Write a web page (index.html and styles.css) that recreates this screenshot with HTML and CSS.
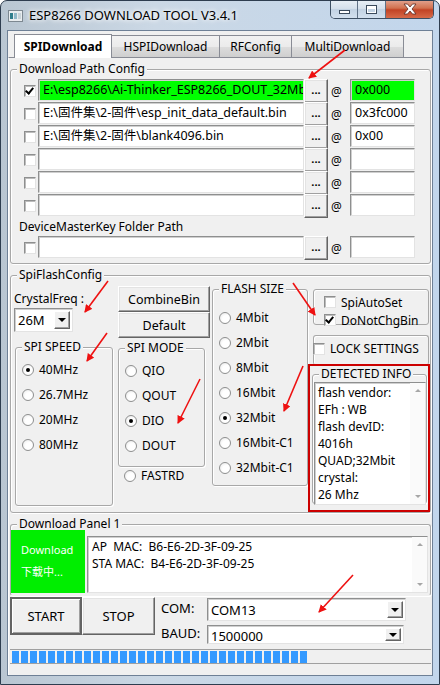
FILE: index.html
```html
<!DOCTYPE html>
<html>
<head>
<meta charset="utf-8">
<title>ESP8266 DOWNLOAD TOOL</title>
<link rel="stylesheet" href="styles.css">
</head>
<body>
<div class="window">
  <div class="titlebar">
    <svg class="app-icon" width="15" height="12" viewBox="0 0 15 12">
      <rect x="0.5" y="0.5" width="14" height="11" fill="#e8ecef" stroke="#7d8891"/>
      <rect x="2" y="3" width="3" height="6" fill="#2f7d8c"/>
      <rect x="6" y="3" width="3" height="6" fill="#8fb8c8"/>
      <rect x="10" y="3" width="3" height="6" fill="#c9d3d8"/>
    </svg>
    <span class="title">ESP8266 DOWNLOAD TOOL V3.4.1</span>
    <div class="caption">
      <span class="cap cap-min"><i></i></span>
      <span class="cap cap-max"><i></i></span>
      <span class="cap cap-close">
        <svg width="16" height="12" viewBox="0 0 16 12"><path d="M2 1 L5.5 1 L8 4 L10.5 1 L14 1 L10 6 L14 11 L10.5 11 L8 8 L5.5 11 L2 11 L6 6 Z" fill="#fff" stroke="#5a2a22" stroke-width="0.8"/></svg>
      </span>
    </div>
  </div>

  <div class="client">
    <div class="tabs">
      <span class="tab active">SPIDownload</span>
      <span class="tab">HSPIDownload</span>
      <span class="tab">RFConfig</span>
      <span class="tab">MultiDownload</span>
    </div>

    <div class="panel">
      <fieldset class="group g-path">
        <legend>Download Path Config</legend>
        <div class="prow">
          <span class="chk checked"></span>
          <span class="tbox path green"><span class="tb-text">E:\esp8266\Ai-Thinker_ESP8266_DOUT_32Mb</span></span>
          <span class="btn dots">...</span>
          <span class="at">@</span>
          <span class="tbox addr green">0x000</span>
        </div>
        <div class="prow">
          <span class="chk"></span>
          <span class="tbox path"><span class="tb-text">E:\固件集\2-固件\esp_init_data_default.bin</span></span>
          <span class="btn dots">...</span>
          <span class="at">@</span>
          <span class="tbox addr">0x3fc000</span>
        </div>
        <div class="prow">
          <span class="chk"></span>
          <span class="tbox path"><span class="tb-text">E:\固件集\2-固件\blank4096.bin</span></span>
          <span class="btn dots">...</span>
          <span class="at">@</span>
          <span class="tbox addr">0x00</span>
        </div>
        <div class="prow">
          <span class="chk"></span>
          <span class="tbox path"></span>
          <span class="btn dots">...</span>
          <span class="at">@</span>
          <span class="tbox addr"></span>
        </div>
        <div class="prow">
          <span class="chk"></span>
          <span class="tbox path"></span>
          <span class="btn dots">...</span>
          <span class="at">@</span>
          <span class="tbox addr"></span>
        </div>
        <div class="prow">
          <span class="chk"></span>
          <span class="tbox path"></span>
          <span class="btn dots">...</span>
          <span class="at">@</span>
          <span class="tbox addr"></span>
        </div>
        <div class="dmk">DeviceMasterKey Folder Path</div>
        <div class="prow">
          <span class="chk"></span>
          <span class="tbox path"></span>
          <span class="btn dots">...</span>
          <span class="at">@</span>
          <span class="tbox addr"></span>
        </div>
      </fieldset>

      <fieldset class="group g-spi">
        <legend>SpiFlashConfig</legend>
        <div class="spi-cols">
          <div class="col-a">
            <div class="lbl crystal">CrystalFreq :</div>
            <div class="combo c-crystal"><span class="combo-text">26M</span><span class="drop"><b></b></span></div>
            <fieldset class="group g-speed">
              <legend>SPI SPEED</legend>
              <div class="radio-row"><span class="radio on"></span>40MHz</div>
              <div class="radio-row"><span class="radio"></span>26.7MHz</div>
              <div class="radio-row"><span class="radio"></span>20MHz</div>
              <div class="radio-row"><span class="radio"></span>80MHz</div>
            </fieldset>
          </div>
          <div class="col-b">
            <span class="btn wide b-combine">CombineBin</span>
            <span class="btn wide b-default">Default</span>
            <fieldset class="group g-mode">
              <legend>SPI MODE</legend>
              <div class="radio-row"><span class="radio"></span>QIO</div>
              <div class="radio-row"><span class="radio"></span>QOUT</div>
              <div class="radio-row"><span class="radio on"></span>DIO</div>
              <div class="radio-row"><span class="radio"></span>DOUT</div>
            </fieldset>
            <div class="radio-row fastrd"><span class="radio"></span>FASTRD</div>
          </div>
          <fieldset class="group g-size">
            <legend>FLASH SIZE</legend>
            <div class="radio-row"><span class="radio"></span>4Mbit</div>
            <div class="radio-row"><span class="radio"></span>2Mbit</div>
            <div class="radio-row"><span class="radio"></span>8Mbit</div>
            <div class="radio-row"><span class="radio"></span>16Mbit</div>
            <div class="radio-row"><span class="radio on"></span>32Mbit</div>
            <div class="radio-row"><span class="radio"></span>16Mbit-C1</div>
            <div class="radio-row"><span class="radio"></span>32Mbit-C1</div>
          </fieldset>
          <div class="col-d">
            <div class="box box-opts">
              <div class="chk-row"><span class="chk"></span>SpiAutoSet</div>
              <div class="chk-row"><span class="chk checked"></span>DoNotChgBin</div>
            </div>
            <div class="box box-lock">
              <div class="chk-row lock"><span class="chk"></span>LOCK SETTINGS</div>
            </div>
            <div class="redmark">
              <fieldset class="group g-detect">
                <legend>DETECTED INFO</legend>
                <div class="textarea info">
                  <div class="ta-text">flash vendor:<br>EFh : WB<br>flash devID:<br>4016h<br>QUAD;32Mbit<br>crystal:<br>26 Mhz</div>
                  <div class="vscroll"><span class="up"></span><span class="down"></span></div>
                </div>
              </fieldset>
            </div>
          </div>
        </div>
      </fieldset>

      <fieldset class="group g-dl">
        <legend>Download Panel 1</legend>
        <div class="dl-row">
          <div class="dl-status">Download<br>下载中...</div>
          <div class="textarea mac">
            <div class="ta-text">AP&nbsp; MAC:&nbsp; B6-E6-2D-3F-09-25<br>STA MAC:&nbsp; B4-E6-2D-3F-09-25</div>
            <div class="vscroll"><span class="up"></span><span class="down"></span></div>
          </div>
        </div>
      </fieldset>

      <div class="ctrl-row">
        <span class="btn big default-btn">START</span>
        <span class="btn big">STOP</span>
        <div class="port-labels">
          <div class="plbl">COM:</div>
          <div class="plbl">BAUD:</div>
        </div>
        <div class="port-combos">
          <div class="combo c-com"><span class="combo-text">COM13</span><span class="drop"><b></b></span></div>
          <div class="combo c-baud"><span class="combo-text">1500000</span><span class="drop"><b></b></span></div>
        </div>
      </div>

      <div class="progress">
        <span></span><span></span><span></span><span></span><span></span><span></span><span></span><span></span><span></span><span></span><span></span>
        <span></span><span></span><span></span><span></span><span></span><span></span><span></span><span></span><span></span><span></span><span></span>
        <span></span><span></span><span></span><span></span><span></span><span></span><span></span><span></span><span></span><span></span><span></span>
      </div>
    </div>
  </div>

  <svg class="arrows" width="440" height="685" viewBox="0 0 440 685">
    <defs>
      <marker id="ah" markerWidth="8" markerHeight="8" refX="7" refY="4" orient="auto" markerUnits="userSpaceOnUse">
        <path d="M0 0 L8 4 L0 8 Z" fill="#ee1111"/>
      </marker>
    </defs>
    <g stroke="#ee1111" stroke-width="1.6" marker-end="url(#ah)">
      <line x1="345" y1="50" x2="309" y2="78"/>
      <line x1="108" y1="281" x2="85" y2="312"/>
      <line x1="107" y1="333" x2="87" y2="361"/>
      <line x1="200" y1="379" x2="178" y2="423"/>
      <line x1="293" y1="283" x2="315" y2="315"/>
      <line x1="303" y1="366" x2="284" y2="411"/>
      <line x1="353" y1="575" x2="319" y2="612"/>
    </g>
  </svg>
</div>
</body>
</html>
```

FILE: styles.css
```css
* { box-sizing: border-box; }
html, body { margin: 0; padding: 0; background: #fff; }
body {
  font-family: "Noto Sans", "Noto Sans CJK SC", sans-serif;
  font-size: 12px;
  color: #000;
}

.window {
  position: relative;
  width: 440px;
  height: 685px;
  border: 1px solid #2e3d4f;
  border-radius: 7px 7px 0 0;
  background: linear-gradient(to right, #b9c6d2 0%, #cbd8e5 35%, #c2d6ec 100%);
  overflow: hidden;
}

/* ---------- title bar ---------- */
.titlebar {
  height: 29px;
  display: flex;
  align-items: flex-start;
}
.app-icon { margin: 9px 0 0 7px; flex: none; }
.title {
  margin: 6px 0 0 6px;
  font-size: 13px;
  line-height: 17px;
  color: #000;
  text-shadow: 0 0 6px #fff, 0 0 4px #fff;
}
.caption {
  margin-left: auto;
  margin-right: 5px;
  display: flex;
  height: 19px;
  margin-top: -1px;
  border: 1px solid #3d4f63;
  border-top: none;
  border-radius: 0 0 5px 5px;
  overflow: hidden;
}
.cap {
  display: flex;
  align-items: center;
  justify-content: center;
  height: 18px;
  background: linear-gradient(#e9f0f7, #d3dfeb 50%, #c2d2e3 51%, #d2e0ee);
  border-right: 1px solid #5f7186;
}
.cap-min { width: 27px; }
.cap-max { width: 28px; }
.cap-close {
  width: 47px;
  border-right: none;
  background: linear-gradient(#e3a592, #d2714f 45%, #c24325 55%, #d76a48);
}
.cap-min i {
  display: block; width: 11px; height: 4px; margin-top: 5px;
  background: #fff; border: 1px solid #3a4a5c;
}
.cap-max i {
  display: block; width: 11px; height: 9px;
  background: transparent; border: 1px solid #3a4a5c;
  box-shadow: inset 0 0 0 1px #fff, inset 0 2px 0 1px #fff;
}

/* ---------- client ---------- */
.client {
  margin-left: 6px;
  width: 426px;
  height: 646px;
  border: 1px solid #6e8096;
  background: #f0f0f0;
  display: flex;
  flex-direction: column;
}

.tabs {
  display: flex;
  align-items: flex-end;
  height: 26px;
  padding-left: 6px;
  position: relative;
  z-index: 1;
}
.tab {
  height: 22px;
  padding: 0;
  border: 1px solid #898c95;
  border-bottom: none;
  background: linear-gradient(#f2f2f2, #ebebeb 50%, #dddddd 51%, #cfcfcf);
  text-align: center;
  line-height: 21px;
  margin-left: -1px;
}
.tab:nth-child(1) { width: 98px; }
.tab:nth-child(2) { width: 109px; }
.tab:nth-child(3) { width: 73px; }
.tab:nth-child(4) { width: 113px; }
.tab.active {
  height: 24px;
  background: #fff;
  font-weight: bold;
  margin-left: 0;
  margin-bottom: -1px;
  line-height: 23px;
  border-color: #898c95;
}

.panel {
  flex: 1;
  border-top: 1px solid #898c95;
  border-left: 1px solid #fff;
  display: flex;
  flex-direction: column;
}

/* ---------- group boxes ---------- */
fieldset.group {
  margin: 0;
  padding: 0;
  min-width: 0;
  border: 1px solid #a8a8a8;
  border-radius: 3px;
  box-shadow: 1px 1px 0 #fff, inset 1px 1px 0 #fff;
}
fieldset.group > legend {
  padding: 0 2px;
  margin-left: 6px;
  line-height: 16px;
  background: #f0f0f0;
}

.g-path {
  margin: 3px 0 0 1px !important;
  width: 421px;
  height: 203px;
  padding-top: 2px !important;
}

.prow {
  display: flex;
  align-items: flex-start;
  height: 23px;
}
.prow .chk { margin: 6px 0 0 13px; }
.tbox {
  height: 22px;
  background: #fff;
  border: 1px solid;
  border-color: #8e8f8f #e3e3e3 #e3e3e3 #8e8f8f;
  box-shadow: inset 1px 1px 0 #cfcfcf;
  padding: 0 4px;
  line-height: 20px;
  white-space: nowrap;
  overflow: hidden;
  font-size: 12.5px;
}
.tb-text { display: block; overflow: hidden; white-space: nowrap; }
.tbox.path { width: 266px; margin-left: 2px; padding-right: 0; }
.tbox.addr { width: 65px; margin-left: 5px; }
.tbox.green { background: #00ff00; }
.at { width: 17px; padding-left: 3px; line-height: 26px; }

.btn {
  display: flex;
  align-items: center;
  justify-content: center;
  background: #f0f0f0;
  border: 1px solid;
  border-color: #fff #646464 #646464 #fff;
  box-shadow: inset -1px -1px 0 #a0a0a0, inset 1px 1px 0 #e3e3e3;
}
.btn.dots {
  width: 24px;
  height: 24px;
  line-height: 1;
  padding-bottom: 4px;
  font-weight: bold;
  font-size: 11px;
}

.chk {
  display: inline-block;
  width: 12px;
  height: 12px;
  background: #fff;
  border: 1px solid;
  border-color: #8e8f8f #e3e3e3 #e3e3e3 #8e8f8f;
  box-shadow: inset 1px 1px 0 #bcbcbc;
  position: relative;
  flex: none;
}
.chk.checked::after {
  content: "";
  position: absolute;
  left: 2px;
  top: 0px;
  width: 3px;
  height: 6px;
  border: solid #000;
  border-width: 0 2px 2px 0;
  transform: rotate(40deg);
}

.dmk {
  height: 19px;
  line-height: 19px;
  padding-left: 8px;
}

/* ---------- spi flash config ---------- */
.g-spi {
  margin: 3px 0 0 1px !important;
  width: 421px;
  height: 246px;
}
.spi-cols {
  display: flex;
  align-items: flex-start;
}
.col-a {
  width: 99px;
  margin-left: 3px;
  display: flex;
  flex-direction: column;
}
.lbl.crystal { margin-top: 8px; line-height: 16px; }
.combo {
  display: flex;
  align-items: center;
  background: #fff;
  border: 1px solid;
  border-color: #8e8f8f #e3e3e3 #e3e3e3 #8e8f8f;
  box-shadow: inset 1px 1px 0 #cfcfcf;
}
.combo-text { flex: 1; padding-left: 3px; white-space: nowrap; }
.drop {
  width: 16px;
  height: calc(100% - 4px);
  margin-right: 2px;
  background: #f0f0f0;
  border: 1px solid;
  border-color: #fff #646464 #646464 #fff;
  box-shadow: inset -1px -1px 0 #a0a0a0;
  display: flex;
  align-items: center;
  justify-content: center;
}
.drop b {
  width: 0; height: 0;
  border-left: 4px solid transparent;
  border-right: 4px solid transparent;
  border-top: 4px solid #000;
}
.c-crystal { width: 59px; height: 24px; margin-top: 1px; font-size: 13px; }

.g-speed {
  margin: 7px 0 0 1px !important;
  width: 98px;
  height: 167px;
  padding-top: 2px !important;
}
.radio-row {
  display: flex;
  align-items: center;
  height: 25px;
  white-space: nowrap;
}
.radio {
  display: inline-block;
  width: 12px;
  height: 12px;
  border-radius: 50%;
  border: 1px solid #8e8f8f;
  background: radial-gradient(circle at 60% 60%, #fff 40%, #e4e4e4 100%);
  margin: 0 5px 0 6px;
  position: relative;
  flex: none;
}
.radio.on::after {
  content: "";
  position: absolute;
  left: 3px; top: 3px;
  width: 4px; height: 4px;
  border-radius: 50%;
  background: #000;
}

.col-b {
  width: 92px;
  margin-left: 5px;
  display: flex;
  flex-direction: column;
}
.btn.wide { width: 92px; height: 26px; font-size: 12.5px; }
.b-combine { margin-top: 3px; }
.b-default { margin-top: 0; }
.g-mode {
  margin-top: 2px !important;
  width: 87px;
  height: 127px;
  padding-top: 2px !important;
}
.fastrd { margin-top: -4px; }

.g-size {
  margin: -2px 0 0 2px !important;
  width: 96px;
  height: 205px;
  padding-top: 8px !important;
}
.g-size .radio-row { height: 25px; }

.col-d {
  width: 121px;
  display: flex;
  flex-direction: column;
}
.box {
  border: 1px solid #a8a8a8;
  border-radius: 3px;
  box-shadow: inset 1px 1px 0 #fff;
  margin-left: 5px;
}
.box-opts {
  margin-top: 6px;
  height: 36px;
  padding: 4px 0 0 10px;
}
.chk-row {
  display: flex;
  align-items: center;
  height: 16px;
  white-space: nowrap;
}
.chk-row .chk { margin-right: 5px; }
.chk-row:nth-child(2) { margin-top: 2px; }
.box-lock {
  margin-top: 10px;
  height: 30px;
  border-bottom: none;
  padding: 6px 0 0 0;
  margin-left: 5px;
}
.chk-row.lock .chk { margin-left: -1px; }
.chk-row.lock { height: 13px; }

.redmark {
  margin-top: -1px;
  margin-left: 0;
  width: 122px;
  height: 148px;
  border: 2px solid #cc0000;
  padding: 0 1px 0 2px;
  position: relative;
  z-index: 2;
}
.g-detect {
  width: 115px;
  height: 138px;
  border-color: #a8a8a8;
}
.g-detect > legend { margin-left: 5px; }
.textarea {
  display: flex;
  background: #fff;
  border: 1px solid;
  border-color: #8e8f8f #e3e3e3 #e3e3e3 #8e8f8f;
  box-shadow: inset 1px 1px 0 #cfcfcf;
}
.ta-text {
  flex: 1;
  padding: 1px 0 0 3px;
  line-height: 17px;
  white-space: nowrap;
  overflow: hidden;
}
.textarea.info {
  margin: 0 0 0 1px;
  width: 112px;
  height: 123px;
}
.vscroll {
  width: 15px;
  background: #fafafa;
  display: flex;
  flex-direction: column;
  justify-content: space-between;
  align-items: center;
  padding: 6px 0;
}
.vscroll .up {
  width: 0; height: 0;
  border-left: 3px solid transparent;
  border-right: 3px solid transparent;
  border-bottom: 3px solid #a6a6a6;
}
.vscroll .down {
  width: 0; height: 0;
  border-left: 3px solid transparent;
  border-right: 3px solid transparent;
  border-top: 3px solid #a6a6a6;
}

/* ---------- download panel ---------- */
.g-dl {
  margin: 3px 0 0 1px !important;
  width: 421px;
  height: 80px;
  border-bottom-color: transparent !important;
}
.dl-row {
  display: flex;
  align-items: flex-start;
  margin-top: -2px;
}
.dl-status {
  width: 74px;
  height: 63px;
  background: #00ee00;
  color: #fff;
  font-size: 11px;
  line-height: 22px;
  padding: 9px 0 0 10px;
}
.textarea.mac {
  margin: 6px 0 0 2px;
  width: 341px;
  height: 57px;
}
.textarea.mac .ta-text { padding: 1px 0 0 4px; }

/* ---------- controls ---------- */
.ctrl-row {
  display: flex;
  align-items: flex-start;
  margin: 1px 0 0 1px;
  height: 52px;
}
.btn.big {
  width: 73px;
  height: 38px;
  font-size: 13px;
}
.default-btn {
  width: 72px !important;
  border: 2px solid #646464;
  box-shadow: inset 1px 1px 0 #fff, inset -1px -1px 0 #a0a0a0;
}
.port-labels {
  margin-left: 6px;
  width: 46px;
  display: flex;
  flex-direction: column;
}
.plbl { height: 25px; line-height: 22px; font-size: 13px; }
.port-combos { display: flex; flex-direction: column; }
.c-com { width: 199px; height: 23px; margin-top: 1px; font-size: 13px; }
.c-baud { width: 197px; height: 19px; margin-top: 4px; font-size: 13px; line-height: 1; }
.c-baud .combo-text { padding-top: 4px; }

.progress {
  margin: 0 0 0 1px;
  width: 421px;
  height: 15px;
  border-top: 1px solid #a0a0a0;
  border-bottom: 1px solid #a0a0a0;
  display: flex;
  gap: 2px;
  padding: 0 0 0 2px;
  align-items: center;
}
.progress span {
  width: 7px;
  height: 12px;
  background: #3399ff;
}

/* ---------- annotation arrows ---------- */
.arrows {
  position: absolute;
  left: -1px;
  top: -1px;
  pointer-events: none;
  z-index: 10;
}
```
